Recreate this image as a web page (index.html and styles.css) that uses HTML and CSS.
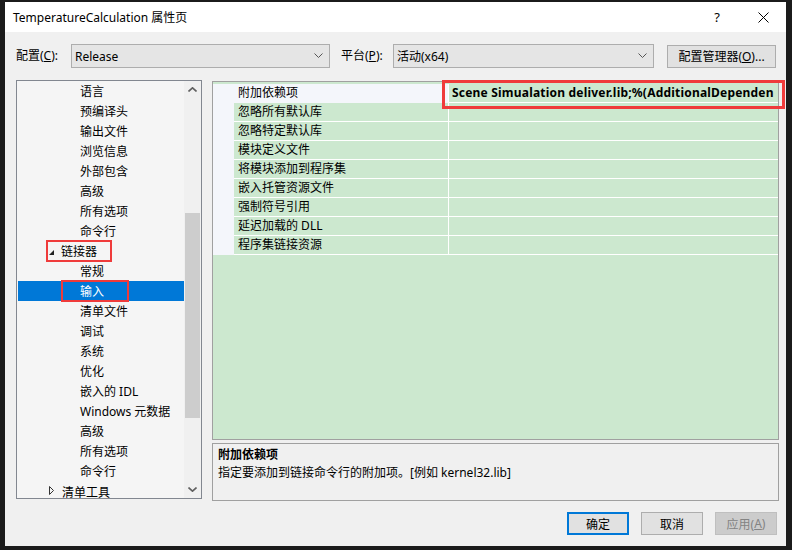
FILE: index.html
```html
<!DOCTYPE html>
<html lang="zh-CN">
  <head>
    <meta charset="UTF-8" />
    <title>TemperatureCalculation 属性页</title>
    <link rel="stylesheet" href="styles.css">
  </head>
  <body>
    <div class="dialog">
      <div class="titlebar">
        <div class="title">TemperatureCalculation 属性页</div>
        <div class="caption-btn">?</div>
        <div class="caption-btn">
          <svg width="11" height="11" viewBox="0 0 11 11"><path d="M0.5 0.5L10.5 10.5M10.5 0.5L0.5 10.5" stroke="#000" stroke-width="1" fill="none"/></svg>
        </div>
      </div>

      <div class="toolbar">
        <label class="field-label label-config">配置(<u>C</u>):</label>
        <div class="combo combo-config">
          <span>Release</span>
          <svg class="chevron" width="9" height="5" viewBox="0 0 9 5"><path d="M0.5 0.5L4.5 4.5L8.5 0.5" stroke="#555" fill="none"/></svg>
        </div>
        <label class="field-label label-platform">平台(<u>P</u>):</label>
        <div class="combo combo-platform">
          <span>活动(x64)</span>
          <svg class="chevron" width="9" height="5" viewBox="0 0 9 5"><path d="M0.5 0.5L4.5 4.5L8.5 0.5" stroke="#555" fill="none"/></svg>
        </div>
        <div class="btn btn-manager">配置管理器(<u>O</u>)...</div>
      </div>

      <div class="main">
        <div class="tree">
          <div class="tree-list">
            <div class="node leaf">语言</div>
            <div class="node leaf">预编译头</div>
            <div class="node leaf">输出文件</div>
            <div class="node leaf">浏览信息</div>
            <div class="node leaf">外部包含</div>
            <div class="node leaf">高级</div>
            <div class="node leaf">所有选项</div>
            <div class="node leaf">命令行</div>
            <div class="node group">
              <span class="mark mark-group">
                <svg class="arrow" width="5" height="5" viewBox="0 0 5 5"><polygon points="5,0 5,5 0,5" fill="#222"/></svg>
                链接器
              </span>
            </div>
            <div class="node leaf">常规</div>
            <div class="node leaf selected"><span class="mark mark-leaf">输入</span></div>
            <div class="node leaf">清单文件</div>
            <div class="node leaf">调试</div>
            <div class="node leaf">系统</div>
            <div class="node leaf">优化</div>
            <div class="node leaf">嵌入的 IDL</div>
            <div class="node leaf">Windows 元数据</div>
            <div class="node leaf">高级</div>
            <div class="node leaf">所有选项</div>
            <div class="node leaf">命令行</div>
            <div class="node group last">
              <svg class="arrow-closed" width="5" height="9" viewBox="0 0 5 9"><polygon points="0.5,0.5 4.5,4.5 0.5,8.5" fill="none" stroke="#333"/></svg>
              清单工具
            </div>
          </div>
          <div class="scrollbar">
            <div class="sb-btn">
              <svg width="9" height="5" viewBox="0 0 9 5"><path d="M0.5 4.5L4.5 0.8L8.5 4.5" stroke="#606060" stroke-width="1.6" fill="none"/></svg>
            </div>
            <div class="sb-track"><div class="sb-thumb"></div></div>
            <div class="sb-btn">
              <svg width="9" height="5" viewBox="0 0 9 5"><path d="M0.5 0.5L4.5 4.2L8.5 0.5" stroke="#606060" stroke-width="1.6" fill="none"/></svg>
            </div>
          </div>
        </div>

        <div class="right">
          <div class="grid">
            <div class="prop-row current">
              <div class="stripe"></div>
              <div class="prop-name">附加依赖项</div>
              <div class="prop-value marked"><span class="value-text">Scene Simualation deliver.lib;%(AdditionalDependen</span></div>
            </div>
            <div class="prop-row">
              <div class="stripe"></div>
              <div class="prop-name">忽略所有默认库</div>
              <div class="prop-value"></div>
            </div>
            <div class="prop-row">
              <div class="stripe"></div>
              <div class="prop-name">忽略特定默认库</div>
              <div class="prop-value"></div>
            </div>
            <div class="prop-row">
              <div class="stripe"></div>
              <div class="prop-name">模块定义文件</div>
              <div class="prop-value"></div>
            </div>
            <div class="prop-row">
              <div class="stripe"></div>
              <div class="prop-name">将模块添加到程序集</div>
              <div class="prop-value"></div>
            </div>
            <div class="prop-row">
              <div class="stripe"></div>
              <div class="prop-name">嵌入托管资源文件</div>
              <div class="prop-value"></div>
            </div>
            <div class="prop-row">
              <div class="stripe"></div>
              <div class="prop-name">强制符号引用</div>
              <div class="prop-value"></div>
            </div>
            <div class="prop-row">
              <div class="stripe"></div>
              <div class="prop-name">延迟加载的 DLL</div>
              <div class="prop-value"></div>
            </div>
            <div class="prop-row">
              <div class="stripe"></div>
              <div class="prop-name">程序集链接资源</div>
              <div class="prop-value"></div>
            </div>
          </div>

          <div class="desc">
            <div class="desc-title">附加依赖项</div>
            <div class="desc-text">指定要添加到链接命令行的附加项。[例如 kernel32.lib]</div>
          </div>
        </div>
      </div>

      <div class="buttons">
        <div class="btn btn-default">确定</div>
        <div class="btn">取消</div>
        <div class="btn btn-disabled">应用(<u>A</u>)</div>
      </div>
    </div>
  </body>
</html>
```

FILE: styles.css
```css
* {
  box-sizing: border-box;
}
body {
  margin: 0;
  padding: 2px 6px 0 5px;
  background-color: #1b1b1b;
  font-family: "Noto Sans", "Noto Sans CJK SC", sans-serif;
  font-size: 12px;
  color: #000;
}
u {
  text-decoration: underline;
  text-underline-offset: 1px;
}
.dialog {
  width: 781px;
  height: 544px;
  background-color: #f0f0f0;
  display: flex;
  flex-direction: column;
}

/* title bar */
.titlebar {
  height: 30px;
  background-color: #fff;
  display: flex;
  align-items: center;
  padding-left: 8px;
}
.title {
  flex: 1;
  font-size: 12px;
}
.caption-btn {
  width: 46px;
  height: 30px;
  display: flex;
  align-items: center;
  justify-content: center;
  font-size: 13px;
}

/* config row */
.toolbar {
  margin-top: 12px;
  height: 24px;
  padding-left: 11px;
  display: flex;
  align-items: center;
}
.field-label {
  line-height: 24px;
}
.label-config {
  width: 55px;
}
.label-platform {
  width: 52px;
  margin-left: 11px;
}
.combo {
  height: 24px;
  border: 1px solid #adadad;
  background-color: #e5e5e5;
  display: flex;
  align-items: center;
  padding: 0 6px 0 3px;
}
.combo span {
  flex: 1;
}
.combo-config {
  width: 259px;
}
.combo-platform {
  width: 261px;
}
.chevron {
  margin-bottom: 1px;
}
.btn {
  width: 62px;
  height: 23px;
  border: 1px solid #adadad;
  background-color: #e1e1e1;
  display: flex;
  align-items: center;
  justify-content: center;
}
.btn-manager {
  width: 109px;
  margin-left: 13px;
}

/* main area */
.main {
  margin-top: 12px;
  padding-left: 11px;
  display: flex;
  gap: 10px;
}
.tree {
  width: 186px;
  height: 419px;
  border: 1px solid #828790;
  background-color: #f5f5f5;
  display: flex;
  overflow: hidden;
}
.tree-list {
  flex: 1;
  overflow: hidden;
}
.node {
  height: 20px;
  display: flex;
  align-items: center;
  white-space: nowrap;
}
.node.last {
  height: 17px;
  align-items: flex-start;
  padding-top: 2px;
  overflow: hidden;
}
.leaf {
  padding-left: 63px;
}
.group {
  padding-left: 31px;
}
.selected {
  background-color: #0078d7;
  color: #fff;
  margin-left: 1px;
  padding-left: 45px;
}
.mark {
  height: 18px;
  display: inline-flex;
  align-items: center;
  outline: 2px solid #ef3b3b;
}
.mark-group {
  width: 62px;
  padding-left: 1px;
}
.mark-group .arrow {
  margin-right: 7px;
  margin-top: 3px;
}
.mark-leaf {
  width: 64px;
  padding-left: 17px;
}
.arrow-closed {
  margin-left: 1px;
  margin-right: 8px;
  margin-top: 3px;
}
.scrollbar {
  width: 17px;
  background-color: #f0f0f0;
  display: flex;
  flex-direction: column;
}
.sb-btn {
  height: 17px;
  display: flex;
  align-items: center;
  justify-content: center;
}
.sb-track {
  flex: 1;
  padding-top: 115px;
}
.sb-thumb {
  height: 205px;
  margin: 0 1px;
  background-color: #cdcdcd;
}

/* property grid */
.right {
  width: 567px;
  display: flex;
  flex-direction: column;
}
.grid {
  margin-top: 1px;
  height: 359px;
  border: 1px solid #a0a0a0;
  background-color: #cce8cf;
  padding-top: 2px;
}
.prop-row {
  height: 19px;
  display: flex;
}
.stripe {
  width: 21px;
  background-color: #f4f6fb;
}
.prop-name {
  width: 215px;
  padding-left: 4px;
  line-height: 18px;
  border-bottom: 1px solid #fff;
  border-right: 1px solid #fff;
  white-space: nowrap;
}
.current .prop-name {
  background-color: #f4f6fb;
  border-bottom-color: #f4f6fb;
}
.prop-value {
  flex: 1;
  min-width: 0;
  padding-left: 3px;
  line-height: 18px;
  border-bottom: 1px solid #fff;
  white-space: nowrap;
}
.marked {
  position: relative;
}
.value-text {
  display: block;
  font-weight: 700;
  letter-spacing: 0.2px;
  overflow: hidden;
}
.marked::after {
  content: "";
  position: absolute;
  top: -4px;
  left: -7px;
  right: -7px;
  bottom: -7px;
  border: 3px solid #ef3b3b;
}

.desc {
  margin-top: 3px;
  height: 58px;
  border: 1px solid #a0a0a0;
  padding: 2px 5px;
}
.desc-title {
  font-weight: 700;
  line-height: 18px;
}
.desc-text {
  line-height: 18px;
}

/* dialog buttons */
.buttons {
  margin-top: 11px;
  padding-right: 9px;
  display: flex;
  justify-content: flex-end;
  gap: 12px;
}
.btn-default {
  border: 2px solid #0078d7;
}
.btn-disabled {
  background-color: #cccccc;
  border-color: #bfbfbf;
  color: #838383;
}
```
